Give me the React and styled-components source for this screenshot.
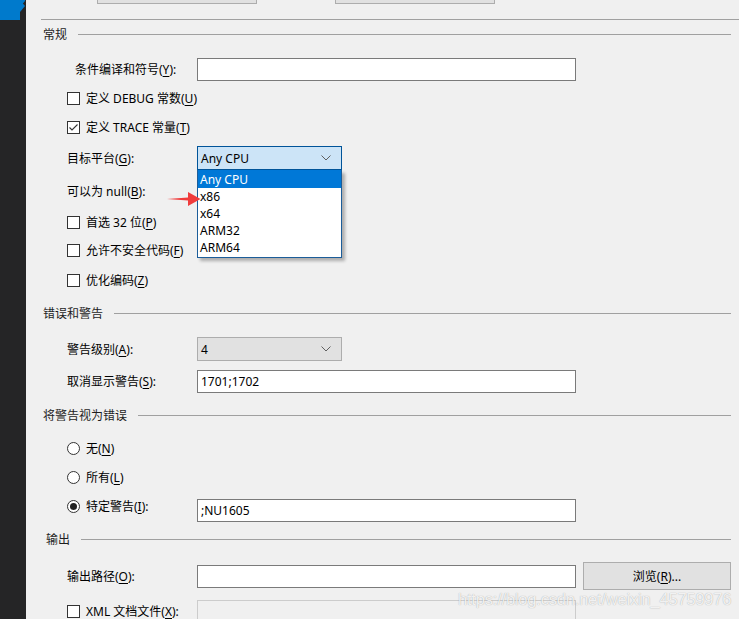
import React from 'react'
import styled, { createGlobalStyle } from 'styled-components'

const Global = createGlobalStyle`
    html, body {
        margin: 0;
        padding: 0;
        background: #f0f0f0;
    }
    body {
        font-family: "Noto Sans", "Noto Sans CJK SC", sans-serif;
        font-size: 12px;
        color: #000;
    }
    u {
        text-decoration: underline;
        text-underline-offset: 2px;
    }
`;

const Frame = styled.div`
    display: flex;
    width: 739px;
    height: 619px;
    overflow: hidden;
    background: #f0f0f0;
`;

const Sidebar = styled.div`
    width: 26px;
    flex: none;
    background: #252526;
`;

const Main = styled.div`
    position: relative;
    flex: 1;
    padding: 0 8px 0 15px;
`;

const TopStrip = styled.div`
    display: flex;
    height: 19px;
    border-bottom: 1px solid #a0a0a0;
    margin-right: -8px;
`;

const StubButton = styled.div`
    width: 158px;
    height: 3px;
    margin-left: ${p => p.$left}px;
    background: #e1e1e1;
    border: 1px solid #adadad;
    border-top: none;
`;

const Header = styled.div`
    display: flex;
    align-items: center;
    gap: 11px;
    height: 20px;
    margin-top: ${p => p.$top}px;
    padding-left: ${p => p.$indent || 2}px;
    color: #1e1e1e;

    &::after {
        content: "";
        flex: 1;
        height: 1px;
        background: #a0a0a0;
    }
`;

const Row = styled.div`
    display: flex;
    align-items: center;
    height: ${p => p.$h || 24}px;
    margin-top: ${p => p.$top}px;
    padding-left: 26px;
`;

const Label = styled.div`
    width: ${p => 130 - (p.$pad || 0)}px;
    padding-left: ${p => p.$pad || 0}px;
    flex: none;
    white-space: nowrap;
`;

const TextBox = styled.div`
    box-sizing: border-box;
    width: 379px;
    height: 23px;
    padding: 0 3px;
    display: flex;
    align-items: center;
    background: ${p => p.$disabled ? '#f0f0f0' : '#fff'};
    border: 1px solid ${p => p.$disabled ? '#cccccc' : '#7a7a7a'};
    ${p => p.$disabled && 'height: 40px; align-self: flex-start; margin-top: 1px;'}
`;

const Select = styled.div`
    box-sizing: border-box;
    width: 145px;
    height: 24px;
    padding: 0 10px 0 3px;
    display: flex;
    align-items: center;
    justify-content: space-between;
    background: ${p => p.$open ? '#cce4f7' : '#e1e1e1'};
    border: 1px solid ${p => p.$open ? '#005499' : '#adadad'};
`;

const Chevron = () => (
    <svg width="10" height="6" viewBox="0 0 10 6">
        <polyline points="0.5,0.5 5,5 9.5,0.5" fill="none" stroke="#606060" strokeWidth="1" />
    </svg>
);

const CheckRow = styled.label`
    display: flex;
    align-items: center;
    gap: 6px;
    white-space: nowrap;
    width: ${p => p.$w ? p.$w + 'px' : 'auto'};
    margin-top: ${p => p.$lift ? -p.$lift + 'px' : '0'};
    flex: none;
`;

const Box = styled.span`
    box-sizing: border-box;
    width: 13px;
    height: 13px;
    border: 1px solid #333;
    background: #fff;
    display: flex;
    align-items: center;
    justify-content: center;
`;

const Round = styled(Box)`
    border-radius: 50%;

    &::after {
        content: "";
        display: ${p => p.$on ? 'block' : 'none'};
        width: 7px;
        height: 7px;
        border-radius: 50%;
        background: #222;
    }
`;

const Checkbox = ({ on }) => (
    <Box>
        {on && (
            <svg width="11" height="11" viewBox="0 0 11 11">
                <polyline points="1.5,5.5 4,8 9.5,2.5" fill="none" stroke="#333" strokeWidth="1.1" />
            </svg>
        )}
    </Box>
);

const Button = styled.div`
    box-sizing: border-box;
    width: 148px;
    height: 28px;
    margin-left: 7px;
    display: flex;
    align-items: center;
    justify-content: center;
    background: #e1e1e1;
    border: 1px solid #adadad;
`;

const DropList = styled.ul`
    position: absolute;
    left: 171px;
    top: 170px;
    box-sizing: border-box;
    width: 145px;
    margin: 0;
    padding: 0 0 1px;
    list-style: none;
    background: #fff;
    border: 1px solid #1c5d99;
    border-top: none;
    box-shadow: 3px 3px 3px rgba(0, 0, 0, 0.28);
`;

const DropItem = styled.li`
    height: ${p => p.$active ? 18 : 17}px;
    line-height: ${p => p.$active ? 19 : 17}px;
    padding-left: 2px;
    background: ${p => p.$active ? '#0078d7' : 'transparent'};
    color: ${p => p.$active ? '#fff' : '#000'};
`;

const Annotation = styled.svg`
    position: absolute;
    left: 141px;
    top: 191px;
`;

const Watermark = styled.div`
    position: absolute;
    left: 432px;
    top: 590px;
    font-family: "Liberation Sans", Arial, sans-serif;
    font-size: 16.5px;
    color: rgba(255, 255, 255, 0.85);
    text-shadow: 0 0 1px rgba(0, 0, 0, 0.35);
    white-space: nowrap;
    letter-spacing: -0.2px;
`;

const TabMark = () => (
    <svg width="26" height="22" viewBox="0 0 26 22" style={{ display: 'block' }}>
        <polygon points="0,0 25,0 25,1 20,7 20,20 0,20" fill="#007acc" />
        <polygon points="20,0 25,6 20,12" fill="#007acc" />
    </svg>
);

export default function App() {
    const platforms = ['Any CPU', 'x86', 'x64', 'ARM32', 'ARM64'];
    return (
        <Frame>
            <Global />
            <Sidebar><TabMark /></Sidebar>
            <Main>
                <TopStrip>
                    <StubButton $left={56} />
                    <StubButton $left={78} />
                </TopStrip>

                <Header $top={4}>常规</Header>
                <Row $top={13}>
                    <Label $pad={8}>条件编译和符号(<u>Y</u>):</Label>
                    <TextBox />
                </Row>
                <Row $top={5}>
                    <CheckRow><Checkbox /><span>定义 DEBUG 常数(<u>U</u>)</span></CheckRow>
                </Row>
                <Row $top={5}>
                    <CheckRow><Checkbox on /><span>定义 TRACE 常量(<u>T</u>)</span></CheckRow>
                </Row>
                <Row $top={7}>
                    <Label>目标平台(<u>G</u>):</Label>
                    <Select $open><span>Any CPU</span><Chevron /></Select>
                </Row>
                <Row $top={9}>
                    <Label>可以为 null(<u>B</u>):</Label>
                </Row>
                <Row $top={7}>
                    <CheckRow><Checkbox /><span>首选 32 位(<u>P</u>)</span></CheckRow>
                </Row>
                <Row $top={4}>
                    <CheckRow><Checkbox /><span>允许不安全代码(<u>F</u>)</span></CheckRow>
                </Row>
                <Row $top={6}>
                    <CheckRow><Checkbox /><span>优化编码(<u>Z</u>)</span></CheckRow>
                </Row>

                <Header $top={11}>错误和警告</Header>
                <Row $top={14}>
                    <Label>警告级别(<u>A</u>):</Label>
                    <Select><span>4</span><Chevron /></Select>
                </Row>
                <Row $top={8}>
                    <Label>取消显示警告(<u>S</u>):</Label>
                    <TextBox>1701;1702</TextBox>
                </Row>

                <Header $top={12}>将警告视为错误</Header>
                <Row $top={11}>
                    <CheckRow><Round /><span>无(<u>N</u>)</span></CheckRow>
                </Row>
                <Row $top={5}>
                    <CheckRow><Round /><span>所有(<u>L</u>)</span></CheckRow>
                </Row>
                <Row $top={9}>
                    <CheckRow $w={130} $lift={8}><Round $on /><span>特定警告(<u>I</u>):</span></CheckRow>
                    <TextBox>;NU1605</TextBox>
                </Row>

                <Header $top={7} $indent={5}>输出</Header>
                <Row $top={13} $h={28}>
                    <Label>输出路径(<u>O</u>):</Label>
                    <TextBox />
                    <Button><span>浏览(<u>R</u>)...</span></Button>
                </Row>
                <Row $top={9}>
                    <CheckRow $w={130}><Checkbox /><span>XML 文档文件(<u>X</u>):</span></CheckRow>
                    <TextBox $disabled />
                </Row>

                <DropList>
                    {platforms.map((p, i) => (
                        <DropItem key={p} $active={i === 0}>{p}</DropItem>
                    ))}
                </DropList>

                <Annotation width="34" height="16" viewBox="0 0 34 16">
                    <polygon points="0,8 21,6.5 21,1 33.5,8 21,15 21,9.5" fill="#f03c3c" />
                </Annotation>

                <Watermark>https://blog.csdn.net/weixin_45759976</Watermark>
            </Main>
        </Frame>
    );
}
